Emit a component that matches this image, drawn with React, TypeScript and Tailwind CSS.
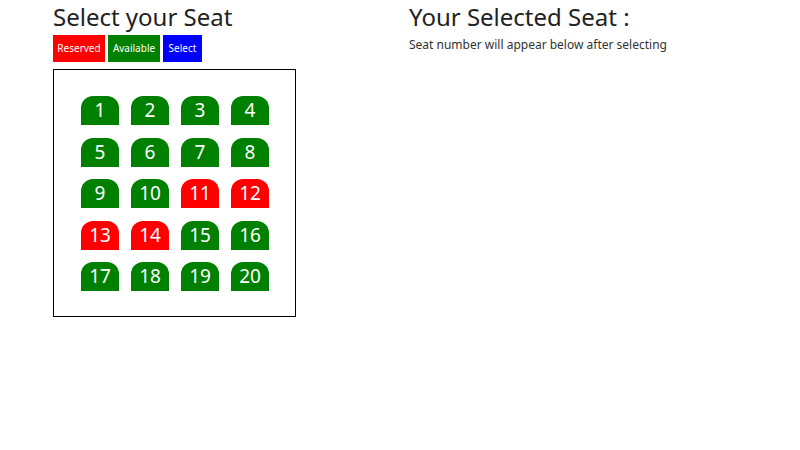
import { useState } from "react";

const reserved = [11, 12, 13, 14];

export default function App() {
  const [selected, setSelected] = useState<number | null>(null);
  const seats = Array.from({ length: 20 }, (_, i) => i + 1);

  return (
    <div
      className="min-h-[450px] w-[800px] bg-white flex pl-[53px] text-[#222]"
      style={{ fontFamily: '"Noto Sans", "Open Sans", sans-serif' }}
    >
      {/* LEFT: seat picker */}
      <div className="w-[243px]">
        <h1 className="text-[24px] leading-[34px] text-[#222] whitespace-nowrap">
          Select your Seat
        </h1>

        {/* LEGEND */}
        <div className="mt-[1px] flex gap-[3px] text-[10px] text-white">
          <span className="h-[27px] w-[52px] bg-[#ff0000] flex items-center justify-center">
            Reserved
          </span>
          <span className="h-[27px] w-[52px] bg-[#008000] flex items-center justify-center">
            Available
          </span>
          <span className="h-[27px] w-[39px] bg-[#0000ff] flex items-center justify-center">
            Select
          </span>
        </div>

        {/* SEAT GRID */}
        <div className="mt-[7px] h-[248px] border border-black pl-[27px] pt-[26px]">
          <div className="grid grid-cols-[repeat(4,38px)] gap-x-[12px] gap-y-[12.5px]">
            {seats.map((n) => {
              const isReserved = reserved.includes(n);
              const isSelected = selected === n;
              return (
                <button
                  key={n}
                  onClick={() => !isReserved && setSelected(n)}
                  className={
                    "h-[29px] w-[38px] rounded-t-[12px] text-[19px] leading-[29px] text-white " +
                    (isReserved
                      ? "bg-[#ff0000]"
                      : isSelected
                      ? "bg-[#0000ff]"
                      : "bg-[#008000]")
                  }
                >
                  {n}
                </button>
              );
            })}
          </div>
        </div>
      </div>

      {/* RIGHT: selected seat */}
      <div className="ml-[113px]">
        <h1 className="text-[24px] leading-[34px] text-[#222] whitespace-nowrap">
          Your Selected Seat :
        </h1>
        <p className="mt-[2px] text-[12px] text-[#333]">
          Seat number will appear below after selecting
        </p>
        {selected && <p className="text-[20px] mt-2">{selected}</p>}
      </div>
    </div>
  );
}
